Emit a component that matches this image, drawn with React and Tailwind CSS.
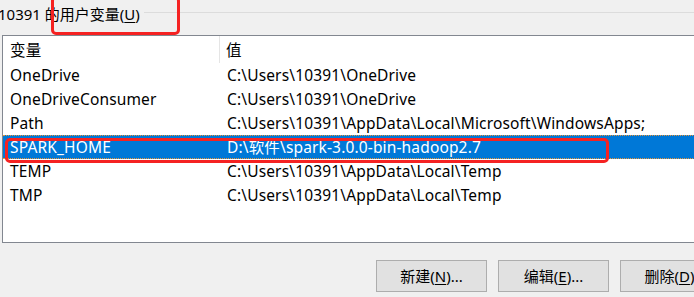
import React from "react";

const rows = [
  ["OneDrive", "C:\\Users\\10391\\OneDrive"],
  ["OneDriveConsumer", "C:\\Users\\10391\\OneDrive"],
  ["Path", "C:\\Users\\10391\\AppData\\Local\\Microsoft\\WindowsApps;"],
  ["SPARK_HOME", "D:\\软件\\spark-3.0.0-bin-hadoop2.7", true],
  ["TEMP", "C:\\Users\\10391\\AppData\\Local\\Temp"],
  ["TMP", "C:\\Users\\10391\\AppData\\Local\\Temp"],
];

function Btn({ label, k }) {
  return (
    <div className="w-[111px] h-[32px] shrink-0 border border-[#adadad] bg-[#e1e1e1] flex items-center justify-center text-[15px] text-black">
      <span>
        {label}(<span className="underline underline-offset-2">{k}</span>)...
      </span>
    </div>
  );
}

export default function App() {
  return (
    <div
      className="relative w-[694px] h-[297px] overflow-hidden bg-[#f0f0f0] text-black"
      style={{ fontFamily: '"Noto Sans", "Noto Sans CJK SC", sans-serif' }}
    >
      <div className="flex h-[35px]">
        <span className="mt-[3px] ml-[-2px] leading-[22px] text-[15px] whitespace-nowrap">
          10391 的用户变量(<span className="underline underline-offset-2">U</span>)
        </span>
        <div className="flex-1 h-px mt-[12px] ml-[4px] bg-[#dcdcdc]" />
      </div>

      <div className="ml-[2px] w-[720px] h-[208px] border border-[#828790] bg-white text-[15.5px] tracking-[0.15px]">
        <div className="flex h-[27px] items-center">
          <div className="w-[217px] h-full pl-[7px] pt-[2px] flex items-center border-r border-[#e5e5e5]">变量</div>
          <div className="pl-[6px] pt-[2px]">值</div>
        </div>
        {rows.map(([n, v, sel]) => (
          <div
            key={n}
            className={
              sel
                ? "flex h-[24px] items-center pt-[1px] bg-[#0078d7] text-white border-y border-dotted border-[#e8963a]"
                : "flex h-[24px] items-center pt-[1px]"
            }
          >
            <div className="w-[218px] pl-[7px] whitespace-nowrap">{n}</div>
            <div className="pl-[6px] whitespace-nowrap">{v}</div>
          </div>
        ))}
      </div>

      <div className="flex gap-[11px] pl-[376px] mt-[17px]">
        <Btn label="新建" k="N" />
        <Btn label="编辑" k="E" />
        <Btn label="删除" k="D" />
      </div>

      <div className="absolute left-[51px] top-[-4px] w-[129px] h-[39px] border-[3px] border-[#f52222] rounded-[5px]" />
      <div className="absolute left-[5px] top-[138px] w-[604px] h-[25px] border-[3px] border-[#f52222] rounded-[5px]" />
    </div>
  );
}
